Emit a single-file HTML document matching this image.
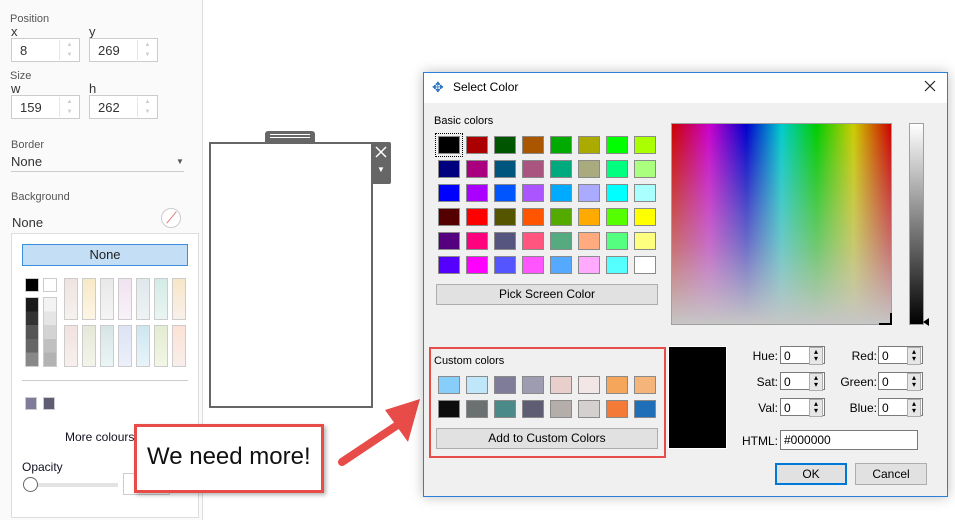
<!DOCTYPE html>
<html><head><meta charset="utf-8"><style>
*{box-sizing:border-box;margin:0;padding:0}
body{width:955px;height:520px;overflow:hidden;background:#fff;font-family:"Liberation Sans",sans-serif;position:relative;font-size:12px;color:#333}
.a{position:absolute}
.lbl{font-size:11px;color:#555}
.inp{position:absolute;border:1px solid #ccc;background:#fff;height:24px;width:69px;font-size:13px;color:#333;padding:4px 8px}
.inp:after{content:"▲\A▼";white-space:pre;font-size:6px;line-height:10px;color:#ccc;text-align:center;position:absolute;right:0;top:1px;width:19px;height:20px;border-left:1px solid #e6e6e6}
.sw{position:absolute;width:22px;height:18px;border:1px solid #8a8a8a}
.btn{position:absolute;background:#e1e1e1;border:1px solid #adadad;font-size:12px;color:#000;text-align:center}
.sp{position:absolute;width:45px;height:18px;border:1px solid #7a7a7a;background:#fff;font-size:12px;color:#000;padding:2px 3px}
.sp:after{content:"▴\A▾";white-space:pre;position:absolute;right:1px;top:0;width:12px;height:16px;border:1px solid #adadad;background:#e6e6e6;font-size:8px;line-height:7px;text-align:center;color:#000}
.sl{position:absolute;font-size:12px;color:#000;text-align:right;width:50px}
.p{position:absolute;width:14px;border:1px solid #ccc}
</style></head><body>
<div class="a" style="left:0;top:0;width:203px;height:520px;background:#fafafa;border-right:1px solid #ddd"></div>
<div class="a lbl" style="left:10px;top:13px">Position</div>
<div class="a" style="left:11px;top:24px;font-size:13px;color:#333">x</div>
<div class="a" style="left:89px;top:24px;font-size:13px;color:#333">y</div>
<div class="inp" style="left:11px;top:38px">8</div>
<div class="inp" style="left:89px;top:38px">269</div>
<div class="a lbl" style="left:10px;top:70px">Size</div>
<div class="a" style="left:11px;top:81px;font-size:13px;color:#333">w</div>
<div class="a" style="left:89px;top:81px;font-size:13px;color:#333">h</div>
<div class="inp" style="left:11px;top:95px">159</div>
<div class="inp" style="left:89px;top:95px">262</div>
<div class="a lbl" style="left:11px;top:139px">Border</div>
<div class="a" style="left:11px;top:154px;font-size:13px;color:#333">None</div>
<div class="a" style="left:176px;top:157px;font-size:8px;color:#555">▼</div>
<div class="a" style="left:11px;top:171px;width:173px;height:1px;background:#ccc"></div>
<div class="a lbl" style="left:11px;top:191px">Background</div>
<div class="a" style="left:12px;top:215px;font-size:13px;color:#333">None</div>
<div class="a" style="left:161px;top:208px;width:20px;height:20px;border:1px solid #ccc;border-radius:50%;background:#fff;overflow:hidden"><div class="a" style="left:2px;top:8px;width:15px;height:1px;background:#d88;transform:rotate(-50deg)"></div></div>
<div class="a" style="left:11px;top:233px;width:188px;height:285px;background:#fff;border:1px solid #ddd"></div>
<div class="a" style="left:22px;top:244px;width:166px;height:22px;background:#c3def5;border:1px solid #3a8fdc;text-align:center;font-size:13px;color:#222;line-height:20px">None</div>
<div class="a" style="left:25px;top:278px;width:14px;height:14px;background:#000;border:1px solid #ccc"></div>
<div class="a" style="left:43px;top:278px;width:14px;height:14px;background:#fff;border:1px solid #ccc"></div>
<div class="p" style="left:25px;top:297px;height:70px;background:linear-gradient(#1a1a1a 0 20%,#333 20% 40%,#555 40% 60%,#666 60% 80%,#888 80%)"></div>
<div class="p" style="left:43px;top:297px;height:70px;background:linear-gradient(#f3f3f3 0 20%,#e5e5e5 20% 40%,#d3d3d3 40% 60%,#c0c0c0 60% 80%,#b3b3b3 80%)"></div>
<div class="p" style="left:64px;top:278px;height:42px;background:linear-gradient(#efe3df,#f6f1ef)"></div>
<div class="p" style="left:82px;top:278px;height:42px;background:linear-gradient(#f8e9c6,#fdf6e6)"></div>
<div class="p" style="left:100px;top:278px;height:42px;background:linear-gradient(#e8e8e8,#f5f5f5)"></div>
<div class="p" style="left:118px;top:278px;height:42px;background:linear-gradient(#f1e2f1,#f8f2f8)"></div>
<div class="p" style="left:136px;top:278px;height:42px;background:linear-gradient(#e0e8ec,#eef3f4)"></div>
<div class="p" style="left:154px;top:278px;height:42px;background:linear-gradient(#d2ebe6,#eaf5f2)"></div>
<div class="p" style="left:172px;top:278px;height:42px;background:linear-gradient(#f8e6c6,#f8f0ea)"></div>
<div class="p" style="left:64px;top:325px;height:42px;background:linear-gradient(#f0e2df,#f8f0ee)"></div>
<div class="p" style="left:82px;top:325px;height:42px;background:linear-gradient(#e5e8d8,#f3f5ea)"></div>
<div class="p" style="left:100px;top:325px;height:42px;background:linear-gradient(#d7e4e6,#eaf5f5)"></div>
<div class="p" style="left:118px;top:325px;height:42px;background:linear-gradient(#dde3f5,#ecf0fa)"></div>
<div class="p" style="left:136px;top:325px;height:42px;background:linear-gradient(#cde6f0,#e8f4fa)"></div>
<div class="p" style="left:154px;top:325px;height:42px;background:linear-gradient(#e3ecd0,#f2f6e6)"></div>
<div class="p" style="left:172px;top:325px;height:42px;background:linear-gradient(#fce2d6,#f8eeea)"></div>
<div class="a" style="left:22px;top:380px;width:166px;height:1px;background:#ccc"></div>
<div class="a" style="left:25px;top:397px;width:12px;height:13px;background:#7e7c98;border:1px solid #ccc"></div>
<div class="a" style="left:43px;top:397px;width:12px;height:13px;background:#5e5d73;border:1px solid #ccc"></div>
<div class="a" style="left:65px;top:430px;font-size:12px;color:#112">More colours</div>
<div class="a" style="left:22px;top:460px;font-size:12px;color:#112">Opacity</div>
<div class="a" style="left:30px;top:483px;width:88px;height:4px;background:#e3e3e3"></div>
<div class="a" style="left:23px;top:477px;width:15px;height:15px;border:1px solid #666;border-radius:50%;background:#fff"></div>
<div class="a" style="left:123px;top:473px;width:47px;height:22px;border:1px solid #ccc;background:#fff"></div>
<div class="a" style="left:265px;top:131px;width:50px;height:13px;background:#666;border-radius:3px 3px 0 0"></div>
<div class="a" style="left:270px;top:134px;width:40px;height:1px;background:#fff"></div>
<div class="a" style="left:270px;top:137px;width:40px;height:1px;background:#fff"></div>
<div class="a" style="left:209px;top:142px;width:164px;height:266px;border:2px solid #666;background:#fff"></div>
<div class="a" style="left:371px;top:142px;width:20px;height:42px;background:#666;border-radius:0 2px 2px 0;color:#fff;text-align:center"><svg width="20" height="20"><path d="M5 5L15 15M15 5L5 15" stroke="#fff" stroke-width="1.5"/></svg><div style="font-size:8px;margin-top:0px">▼</div></div>
<div class="a" style="left:134px;top:424px;width:190px;height:69px;border:3px solid #e74c48;background:#fff;box-shadow:2px 2px 4px rgba(0,0,0,.3);font-size:24px;color:#111;padding:16px 0 0 10px">We need more!</div>
<svg class="a" style="left:330px;top:380px" width="100" height="100"><line x1="12" y1="82" x2="72" y2="42" stroke="#e74c48" stroke-width="8" stroke-linecap="round"/><polygon points="90,19 55,30 78,62" fill="#e74c48"/></svg>
<div class="a" style="left:423px;top:72px;width:525px;height:425px;background:#f0f0f0;border:1px solid #2b7fd8;box-shadow:0 0 12px rgba(0,0,0,.25)"></div>
<div class="a" style="left:424px;top:73px;width:523px;height:30px;background:#fff"></div>
<div class="a" style="left:432px;top:79px;font-size:14px;color:#2a72c2">✥</div>
<div class="a" style="left:453px;top:80px;font-size:12px;color:#000">Select Color</div>
<svg class="a" style="left:924px;top:80px" width="12" height="12"><path d="M1 1L11 11M11 1L1 11" stroke="#222" stroke-width="1.2"/></svg>
<div class="a" style="left:434px;top:115px;font-size:11px;color:#000">Basic colors</div>
<div id="bc"></div>
<div class="a" style="left:435px;top:133px;width:28px;height:24px;border:1px dotted #000"></div>
<div class="btn" style="left:436px;top:284px;width:222px;height:21px;line-height:19px">Pick Screen Color</div>
<div class="a" style="left:429px;top:347px;width:237px;height:111px;border:2px solid #e74c48"></div>
<div class="a" style="left:434px;top:355px;font-size:11px;color:#000">Custom colors</div>
<div class="btn" style="left:436px;top:428px;width:222px;height:21px;line-height:19px">Add to Custom Colors</div>
<div class="a" style="left:671px;top:123px;width:221px;height:202px;border:1px solid #a0a0a0;background:linear-gradient(to bottom,rgba(200,200,200,0),rgba(198,198,198,.55) 60%,rgba(198,198,198,1)),linear-gradient(to right,#cc0000 0%,#c900cc 17%,#0000cc 34%,#00cccc 50%,#00cc00 66%,#cccc00 83%,#cc0000 100%)"></div>
<div class="a" style="left:879px;top:313px;width:13px;height:12px;border-right:2px solid #000;border-bottom:2px solid #000"></div>
<div class="a" style="left:909px;top:123px;width:15px;height:202px;border:1px solid #a0a0a0;background:linear-gradient(#fff,#000)"></div>
<div class="a" style="left:923px;top:318px;width:0;height:0;border-top:4px solid transparent;border-bottom:4px solid transparent;border-right:6px solid #000"></div>
<div class="a" style="left:668px;top:346px;width:59px;height:103px;background:#000;border:1px solid #fff"></div>
<div class="sl" style="left:728px;top:349px">Hue:</div><div class="sp" style="left:780px;top:346px">0</div>
<div class="sl" style="left:728px;top:375px">Sat:</div><div class="sp" style="left:780px;top:372px">0</div>
<div class="sl" style="left:728px;top:401px">Val:</div><div class="sp" style="left:780px;top:398px">0</div>
<div class="sl" style="left:827px;top:349px">Red:</div><div class="sp" style="left:878px;top:346px">0</div>
<div class="sl" style="left:827px;top:375px">Green:</div><div class="sp" style="left:878px;top:372px">0</div>
<div class="sl" style="left:827px;top:401px">Blue:</div><div class="sp" style="left:878px;top:398px">0</div>
<div class="sl" style="left:728px;top:434px">HTML:</div>
<div class="a" style="left:780px;top:430px;width:138px;height:20px;border:1px solid #7a7a7a;background:#fff;font-size:12px;color:#000;padding:2px 3px">#000000</div>
<div class="btn" style="left:775px;top:463px;width:72px;height:22px;border:2px solid #0078d7;line-height:18px">OK</div>
<div class="btn" style="left:855px;top:463px;width:72px;height:22px;line-height:20px">Cancel</div>
<script>
var b=["#000000","#aa0000","#005500","#aa5500","#00aa00","#aaaa00","#00ff00","#aaff00",
"#00007f","#aa007f","#00557f","#aa557f","#00aa7f","#aaaa7f","#00ff7f","#aaff7f",
"#0000ff","#aa00ff","#0055ff","#aa55ff","#00aaff","#aaaaff","#00ffff","#aaffff",
"#550000","#ff0000","#555500","#ff5500","#55aa00","#ffaa00","#55ff00","#ffff00",
"#55007f","#ff007f","#55557f","#ff557f","#55aa7f","#ffaa7f","#55ff7f","#ffff7f",
"#5500ff","#ff00ff","#5555ff","#ff55ff","#55aaff","#ffaaff","#55ffff","#ffffff"];
var c=["#87cefa","#c0e6fa","#7e7c98","#9e9cb0","#e8cfcb","#f3e6e6","#f5a65b","#f5b479",
"#0d0d0d","#6b7070","#4a8a88","#5e5d73","#b5adaa","#d3d0cf","#f47b37","#1f6fb8"];
var h="";
b.forEach(function(x,i){h+='<div class="sw" style="left:'+(438+28*(i%8))+'px;top:'+(136+24*Math.floor(i/8))+'px;background:'+x+'"></div>'});
c.forEach(function(x,i){h+='<div class="sw" style="left:'+(438+28*(i%8))+'px;top:'+(376+24*Math.floor(i/8))+'px;background:'+x+'"></div>'});
document.getElementById("bc").outerHTML=h;
</script>
</body></html>
